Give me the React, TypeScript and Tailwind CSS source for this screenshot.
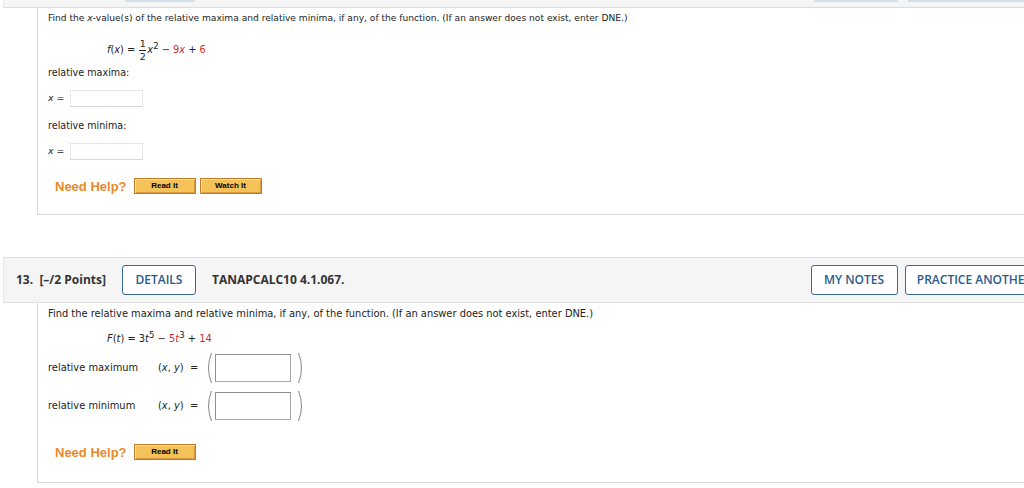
import React from "react";

const body = { fontFamily: '"DejaVu Sans", Verdana, sans-serif' };
const head = { fontFamily: '"Open Sans", "Liberation Sans", sans-serif' };

function HelpBtn({ label, w }: { label: string; w: string }) {
  return (
    <div
      className={`${w} h-[16px] border border-[#c27b25] bg-[#f5c25a] flex items-center justify-center shadow-[inset_1px_1px_0_#fbe1a0,inset_-1px_-1px_0_#d99a3d]`}
    >
      <span
        className="text-[8px] font-bold text-black leading-none"
        style={{ fontFamily: '"Liberation Sans", Arial, sans-serif' }}
      >
        {label}
      </span>
    </div>
  );
}

function NeedHelp({ watch }: { watch?: boolean }) {
  return (
    <div className="flex items-center h-[16px] pl-[7px]">
      <span
        className="text-[13px] font-bold text-[#e8892b] leading-none mr-[7px]"
        style={{ fontFamily: '"Liberation Sans", Arial, sans-serif' }}
      >
        Need Help?
      </span>
      <HelpBtn label="Read It" w="w-[62px]" />
      {watch && (
        <div className="ml-[4px]">
          <HelpBtn label="Watch It" w="w-[62px]" />
        </div>
      )}
    </div>
  );
}

function Paren({ right }: { right?: boolean }) {
  return (
    <svg width="8" height="32" viewBox="0 0 8 32" className="shrink-0">
      <path
        d={right ? "M1.5 1 Q7.5 16 1.5 31" : "M6.5 1 Q0.5 16 6.5 31"}
        fill="none"
        stroke="#777"
        strokeWidth="0.9"
      />
    </svg>
  );
}

function OutlineBtn({ label, w }: { label: string; w: string }) {
  return (
    <div
      className={`${w} h-[30px] shrink-0 border-[1.5px] border-[#3a6a99] rounded-[3px] bg-white flex items-center justify-center`}
    >
      <span className="text-[12px] font-semibold text-[#2a5b8c] whitespace-nowrap" style={head}>
        {label}
      </span>
    </div>
  );
}

export default function App() {
  return (
    <div className="w-[1024px] h-[488px] overflow-hidden bg-white text-[#222]" style={body}>
      <div className="w-[1060px] pl-[3px]">
        {/* top header remnant */}
        <div className="h-[8px] bg-[#f5f5f5] border-b border-[#dcdcdc] border-l border-l-[#e6e6e6] flex items-start">
          <div className="ml-[121px] w-[70px] h-[2px] bg-[#d3dfeb]" />
          <div className="ml-[619px] w-[84px] h-[2px] bg-[#d3dfeb]" />
          <div className="ml-[10px] w-[140px] h-[2px] bg-[#d3dfeb]" />
        </div>

        {/* content 1 */}
        <div className="ml-[34px] border-l border-b border-[#d9d9d9] pl-[10px] pt-[4px] pb-[20px]">
          <div className="h-[14px] flex items-center text-[9.1px] whitespace-nowrap">
            Find the&nbsp;<i>x</i>-value(s) of the relative maxima and relative minima, if any, of the function. (If an answer does not exist, enter DNE.)
          </div>
          <div className="mt-[12px] h-[24px] flex items-center pl-[59px] text-[9.8px] whitespace-nowrap">
            <i>f</i>(<i>x</i>)&nbsp;=&nbsp;
            <span className="inline-flex flex-col items-center leading-none mx-[1px]">
              <span className="text-[9.5px]">1</span>
              <span className="w-[7px] h-px bg-[#222] my-[1.5px]" />
              <span className="text-[9.5px]">2</span>
            </span>
            <i>x</i>
            <sup className="text-[8.5px] -top-[4px]">2</sup>
            &nbsp;−&nbsp;<span className="text-[#d42b1f]">9<i>x</i></span>&nbsp;+&nbsp;
            <span className="text-[#d42b1f]">6</span>
          </div>
          <div className="mt-[4px] h-[14px] flex items-center text-[9.6px]">relative maxima:</div>
          <div className="mt-[10px] h-[17px] flex items-center text-[9.4px]">
            <span className="w-[22px]">
              <i>x</i> =
            </span>
            <div className="w-[73px] h-[17px] border border-[#e6e6e6] border-b-[#d6d6d6]" />
          </div>
          <div className="mt-[12px] h-[14px] flex items-center text-[9.6px]">relative minima:</div>
          <div className="mt-[10px] h-[17px] flex items-center text-[9.4px]">
            <span className="w-[22px]">
              <i>x</i> =
            </span>
            <div className="w-[73px] h-[17px] border border-[#e6e6e6] border-b-[#d6d6d6]" />
          </div>
          <div className="mt-[18px]">
            <NeedHelp watch />
          </div>
        </div>

        {/* header 13 */}
        <div className="mt-[42px] h-[46px] bg-[#f5f5f5] border-t border-b border-[#e0e0e0] border-l border-l-[#e6e6e6] flex items-center pl-[12px] text-[#333]">
          <span className="text-[12px] font-bold whitespace-nowrap" style={head}>
            13.&nbsp; [–/2 Points]
          </span>
          <div className="ml-[16px]">
            <OutlineBtn label="DETAILS" w="w-[74px]" />
          </div>
          <span className="ml-[16px] text-[12px] font-bold whitespace-nowrap" style={head}>
            TANAPCALC10 4.1.067.
          </span>
          <div className="ml-[466px]">
            <OutlineBtn label="MY NOTES" w="w-[87px]" />
          </div>
          <div className="ml-[7px]">
            <OutlineBtn label="PRACTICE ANOTHER" w="w-[140px]" />
          </div>
        </div>

        {/* content 2 */}
        <div className="ml-[34px] border-l border-b border-[#d9d9d9] pl-[10px] pt-[4px] pb-[22px]">
          <div className="h-[14px] flex items-center text-[9.9px] whitespace-nowrap">
            Find the relative maxima and relative minima, if any, of the function. (If an answer does not exist, enter DNE.)
          </div>
          <div className="mt-[10px] h-[16px] flex items-center pl-[59px] text-[9.9px] whitespace-nowrap">
            <i>F</i>(<i>t</i>)&nbsp;=&nbsp;3<i>t</i>
            <sup className="text-[8.5px] -top-[4px]">5</sup>
            &nbsp;−&nbsp;<span className="text-[#d42b1f]">5<i>t</i></span>
            <sup className="text-[8.5px] -top-[4px]">3</sup>
            &nbsp;+&nbsp;<span className="text-[#d42b1f]">14</span>
          </div>
          {["relative maximum", "relative minimum"].map((lbl, i) => (
            <div
              key={lbl}
              className={`${i === 0 ? "mt-[6px]" : "mt-[8px]"} h-[30px] flex items-center text-[9.9px] whitespace-nowrap`}
            >
              <span className="w-[110px]">{lbl}</span>
              <span className="w-[47px]">
                (<i>x</i>, <i>y</i>)&nbsp; =
              </span>
              <Paren />
              <div className="ml-[2px] w-[76px] h-[28px] border border-[#a9a9a9] border-t-[#8f8f8f] border-l-[#8f8f8f]" />
              <div className="ml-[6px]">
                <Paren right />
              </div>
            </div>
          ))}
          <div className="mt-[23px]">
            <NeedHelp />
          </div>
        </div>
      </div>
    </div>
  );
}
